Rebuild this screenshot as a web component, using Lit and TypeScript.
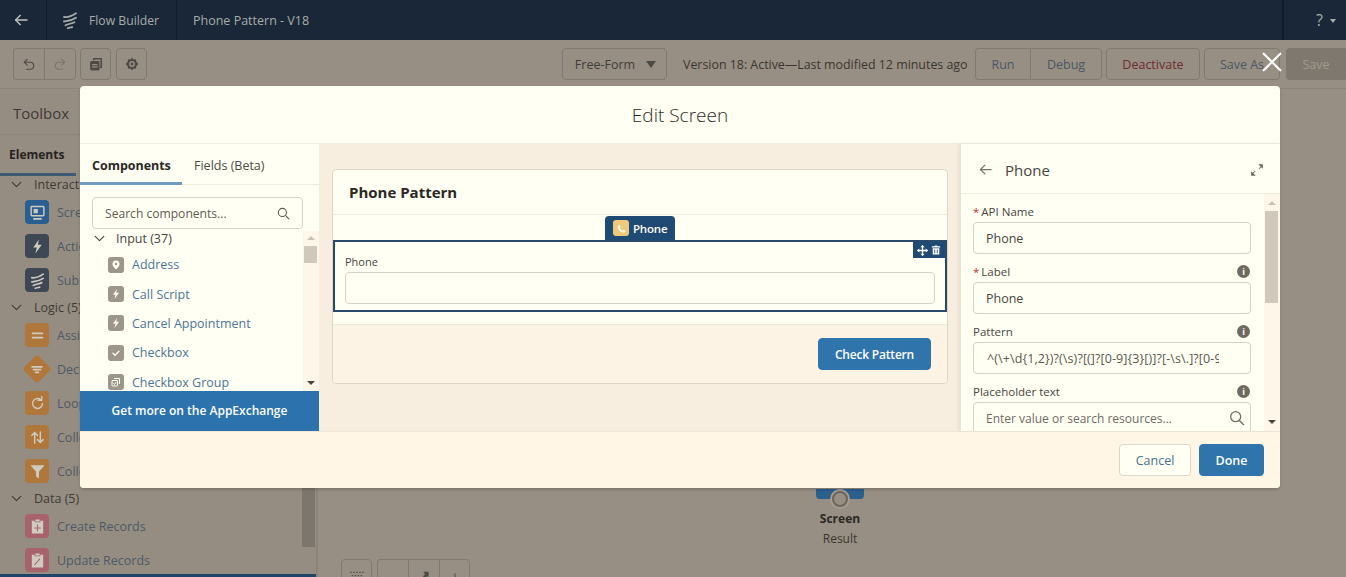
import { LitElement, html, css, svg } from "lit";
import { customElement } from "lit/decorators.js";

const ic = (body: unknown, size = 16, vb = 24, cls = "") =>
  html`<svg class=${cls} width=${size} height=${size} viewBox="0 0 ${vb} ${vb}" fill="none" stroke="currentColor" stroke-width="2" stroke-linecap="round" stroke-linejoin="round">${body}</svg>`;

const P = {
  flow: svg`<path d="M4 8c6 1 10-1 16-5" stroke-width="2.400"/><path d="M4 14c6-1 10-1 16-5" stroke-width="2.400"/><path d="M6 19c4-2 8-2 12-4" stroke-width="2.400"/><path d="M9 23c2-1 4-1 6-1.500" stroke-width="2.400"/>`,
  back: svg`<path d="M21 12H4"/><path d="M11 5l-7 7 7 7"/>`,
  undo: svg`<path d="M9 4L4 9l5 5"/><path d="M4 9h10a6 6 0 0 1 0 12H8"/>`,
  redo: svg`<path d="M15 4l5 5-5 5"/><path d="M20 9H10a6 6 0 0 0 0 12h6"/>`,
  copy: svg`<rect x="3" y="8" width="14" height="14" rx="1.5" fill="currentColor"/><path d="M8 4.500V3h13v15h-1.500" stroke-width="2.600"/><path d="M6 13h8M6 17h8" stroke="#988f84"/>`,
  gear: svg`<path fill="currentColor" stroke="none" fill-rule="evenodd" d="M12 1l2.500 3.200 4.300-.4.500 4.200L23 12l-3.700 4-.5 4.200-4.300-.4L12 23l-2.500-3.200-4.300.4-.5-4.200L1 12l3.700-4 .5-4.200 4.300.4zM12 7a5 5 0 1 0 0 10 5 5 0 0 0 0-10z"/><circle cx="12" cy="12" r="2.400" fill="currentColor" stroke="none"/>`,
  chevron: svg`<path d="M4 8l8 8 8-8"/>`,
  search: svg`<circle cx="10" cy="10" r="7.500"/><path d="M16 16l6 6"/>`,
  screen: svg`<rect x="3" y="3.500" width="18" height="13" rx="1"/><path d="M7 21h10" stroke-width="2.400"/><path fill="currentColor" stroke="none" d="M6.500 7h6v6h-6z"/>`,
  bolt: svg`<path fill="currentColor" stroke="none" d="M14 2L6 13.500h5L9 22l9-12.500h-5.500z"/>`,
  lines: svg`<path d="M5 9h14M5 15h14" stroke-width="2.500"/>`,
  decide: svg`<path d="M5 8h14M7 12h10M10 16h4" stroke-width="2.500"/>`,
  loop: svg`<path d="M19 12a7 7 0 1 1-2.500-5.400"/><path d="M18 2v5.500h-5.500"/>`,
  sort: svg`<path d="M8 20V5M4 9l4-4 4 4M16 4v15M12 15l4 4 4-4"/>`,
  filter: svg`<path fill="currentColor" stroke="none" d="M2 3h20l-8 9.500V22l-4-3v-6.500z"/>`,
  create: svg`<path fill="currentColor" stroke="none" d="M4 4h4v2h8V4h4v18H4zM9 2h6v3H9z"/><path stroke="#a8626c" d="M12 10v8M8 14h8" stroke-width="1.500"/>`,
  update: svg`<path fill="currentColor" stroke="none" d="M4 4h4v2h8V4h4v18H4zM9 2h6v3H9z"/><path stroke="#a8626c" d="M8 18l7-8" stroke-width="1.500"/>`,
  pin: svg`<path fill="currentColor" stroke="none" fill-rule="evenodd" d="M12 3a7 7 0 0 1 7 7c0 5-7 11-7 11s-7-6-7-11a7 7 0 0 1 7-7zm0 4.500a2.500 2.500 0 1 0 0 5 2.500 2.500 0 0 0 0-5z"/>`,
  check: svg`<path d="M6 12.500l4 4 8-8" stroke-width="2.500"/>`,
  group: svg`<rect x="4" y="9" width="11" height="11" rx="1"/><path d="M9 5h10v10"/><path d="M7 15l2 2 3-4"/>`,
  phone: svg`<path fill="currentColor" stroke="none" d="M8 5l2.500 3.500-1.500 2c1 2.500 2.500 4 5 5l2-1.500L19.500 17c-1 2-3 3-5 2.500C9.500 18 6 14.500 5 10c-.5-2 1-4 3-5z"/>`,
  move: svg`<path d="M12 2v20M2 12h20" stroke-width="3"/><path fill="currentColor" stroke="none" d="M12 0l4.500 5h-9zM12 24l4.500-5h-9zM0 12l5-4.500v9zM24 12l-5-4.500v9z"/>`,
  trash: svg`<path fill="currentColor" stroke="none" fill-rule="evenodd" d="M9 1h6v2h7v3H2V3h7zM4 8h16v15H4zm4 3v9h2v-9zm6 0v9h2v-9z"/>`,
  expand: svg`<path fill="currentColor" stroke="none" d="M22 2v8l-2.800-2.800-3.500 3.500-1-1 3.500-3.500L14 2zM2 22v-8l2.800 2.800 3.500-3.500 1 1-3.500 3.500L10 22z"/>`,
  dots: svg`<path stroke-dasharray="2 2.500" stroke-linecap="butt" d="M2 8h20M4 13h16"/><path d="M14 18l4 4" stroke-width="3"/>`,
  minus: svg`<path d="M4 22h16" stroke-width="4" stroke-linecap="butt"/>`,
  shrink: svg`<path d="M2 24l8-8" stroke-width="1.500"/><path fill="currentColor" stroke="none" d="M11 7h8v8l-2.500-1-3 3-3-3 3-3z"/>`,
  plus: svg`<path d="M12 10v14M5 18h14" stroke-width="1.500"/>`,
};

const sidebar = [
  { title: "Interaction", rows: [["Screen", "#295f90", P.screen, 1], ["Action", "#3e4754", P.bolt, 0], ["Subflow", "#3e4754", P.flow, 1]] },
  { title: "Logic (5)", rows: [["Assignment", "#b0773c", P.lines, 1], ["Decision", "#b0773c", P.decide, 2], ["Loop", "#b0773c", P.loop, 1], ["Collection Sort", "#b0773c", P.sort, 1], ["Collection Filter", "#b0773c", P.filter, 0]] },
  { title: "Data (5)", rows: [["Create Records", "#a8626c", P.create, 0], ["Update Records", "#a8626c", P.update, 0]] },
] as const;

const components = [
  ["Address", P.pin],
  ["Call Script", P.bolt],
  ["Cancel Appointment", P.bolt],
  ["Checkbox", P.check],
  ["Checkbox Group", P.group],
] as const;

const info = html`<span class="info">i</span>`;

@customElement("app-root")
export class AppRoot extends LitElement {
  static styles = css`
    :host { display: block; width: 1346px; height: 577px; position: relative; overflow: hidden; background: #988f84; font-family: "Open Sans", "Noto Sans", sans-serif; font-size: 13px; color: #2a2823; }
    * { box-sizing: border-box; }
    svg { display: block; flex: none; }

    .topbar { height: 40px; background: #1a2738; color: #a8aca9; display: flex; align-items: center; font-size: 12.500px; }
    .topbar > div { height: 40px; display: flex; align-items: center; border-right: 1px solid #111c2a; }
    .tb-back { width: 47px; padding-left: 13px; color: #c4c5bf; }
    .tb-app { width: 130px; padding-left: 14px; gap: 10px; font-size: 12.200px; }
    .tb-name { padding-left: 16px; flex: 1; }
    .topbar > .tb-help { width: 63px; border: 0; border-left: 1px solid #111c2a; padding-left: 32px; gap: 7px; font-size: 16px; }
    .caret { width: 0; height: 0; border: 3px solid transparent; border-top: 4px solid currentColor; margin-top: 4px; }

    .toolbar { height: 49px; border-bottom: 1px solid #8d8479; display: flex; align-items: center; padding-left: 13px; }
    .btn { height: 32px; border: 1px solid #807970; border-radius: 4px; display: flex; align-items: center; justify-content: center; color: #4a5864; font-size: 12.500px; white-space: nowrap; }
    .ibtn { width: 31px; color: #4b4a45; }
    .ibtn.off { color: #7a756c; width: 32px; }
    .grp { display: flex; }
    .grp .btn:first-child { border-radius: 4px 0 0 4px; border-right: 0; }
    .grp .btn:last-child { border-radius: 0 4px 4px 0; }
    .m4 { margin-left: 4px; }
    .m5 { margin-left: 5px; }
    .free { width: 105px; margin-left: 415px; gap: 11px; color: #3f3d38; padding-left: 2px; }
    .tri { width: 0; height: 0; border: 5px solid transparent; border-top: 7px solid #4b4a45; border-bottom: 0; }
    .ver { margin-left: 16px; width: 292px; font-size: 12.400px; color: #38362f; white-space: nowrap; }
    .run { width: 55px; }
    .dbg { width: 72px; }
    .deact { width: 94px; color: #6e2a2c; }
    .saveas { width: 76px; }
    .save { width: 60px; margin-left: 6px; background: #7f786e; border-color: #7f786e; color: #a29a8d; border-radius: 4px 0 0 4px; }

    .main { display: flex; height: 488px; }
    .side { width: 318px; height: 488px; background: #968d82; border-right: 2px solid #8d8479; position: relative; overflow: hidden; }
    .side-title { height: 46px; padding: 14px 0 0 13px; font-size: 15px; color: #3d3b36; border-bottom: 1px solid #8d8479; }
    .side-tabs { height: 41px; padding: 11px 0 0 9px; font-weight: 700; font-size: 12px; color: #25231f; position: relative; }
    .side-tabs i { position: absolute; left: 0; bottom: 0; width: 76px; height: 3px; background: #3f5a74; }
    .secs { margin-top: -2px; }
    .sec { height: 21px; display: flex; align-items: center; gap: 11px; padding-left: 10px; color: #3d3b36; font-size: 12.500px; }
    .sec svg { color: #3a3833; }
    .srow { height: 34px; display: flex; align-items: center; gap: 8px; padding-left: 25px; color: #4c5a66; font-size: 12.500px; }
    .sico { width: 24px; height: 24px; border-radius: 4px; color: #cfcbc0; display: flex; align-items: center; justify-content: center; }
    .sico.dia { transform: rotate(45deg) scale(.86); }
    .sico.dia svg { transform: rotate(-45deg) scale(1.16); }
    .sbar { position: absolute; left: 302px; top: 0; width: 13px; height: 458px; background: #7d766c; }
    .sbottom { position: absolute; left: 0; right: 0; bottom: 0; height: 3px; background: #1f4566; }
    .canvas { flex: 1; position: relative; }
    .node { position: absolute; left: 482px; top: 400px; width: 80px; display: flex; flex-direction: column; align-items: center; font-size: 12px; }
    .node-top { width: 48px; height: 10px; background: #2b5f8c; border-radius: 0 0 4px 4px; }
    .node-dot { width: 16px; height: 16px; border-radius: 50%; background: #988f84; border: 2px solid #6b665d; box-shadow: 0 0 0 2px #a59d91; margin-top: -8px; }
    .node b { margin-top: 3px; color: #2a2823; }
    .node span { margin-top: 3px; color: #38362f; }
    .zoomer { position: absolute; left: 23px; top: 470px; display: flex; gap: 5px; color: #4b4a45; }
    .zoomer .btn { height: 32px; width: 31px; border-color: #807970; color: #4b4a45; }
    .zoomer .grp .btn:nth-child(2) { border-radius: 0; border-right: 0; }

    .close { position: absolute; left: 1261px; top: 51px; color: #fff; }
    .modal { position: absolute; left: 80px; top: 86px; width: 1200px; height: 402px; background: #fffff3; border-radius: 4px; display: flex; flex-direction: column; overflow: hidden; box-shadow: 0 2px 3px rgba(0,0,0,.16); }
    .m-head { height: 58px; flex: none; display: flex; align-items: center; justify-content: center; font-size: 19px; font-weight: 300; color: #2e2c27; border-bottom: 1px solid #f0ebdb; }
    .m-body { flex: 1; min-height: 0; display: flex; }
    .m-foot { height: 57px; flex: none; background: #fff6e6; border-top: 1px solid #f0e8d6; display: flex; align-items: center; justify-content: flex-end; gap: 8px; padding: 0 16px 0 0; }
    .cancel { width: 72px; background: #fffff3; border: 1px solid #dcd6c6; color: #47708f; }
    .done { width: 65px; background: #2f75ab; border: 1px solid #2f75ab; color: #fff; font-weight: 600; }

    .left { width: 240px; flex: none; display: flex; flex-direction: column; border-right: 1px solid #f5efdf; }
    .tabs { height: 41px; flex: none; display: flex; border-bottom: 1px solid #f0ebdb; font-size: 12.500px; }
    .tab { height: 41px; padding: 2px 12px 0; display: flex; align-items: center; color: #4d4b45; }
    .tab.on { width: 102px; font-weight: 700; color: #2a2823; border-bottom: 3px solid #6f9bbd; padding-top: 4px; letter-spacing: -.03px; }
    .s-wrap { height: 46px; flex: none; padding: 12px 0 0 12px; }
    .search { width: 211px; height: 32px; border: 1px solid #d8d2c2; border-radius: 4px; display: flex; align-items: center; justify-content: space-between; padding: 0 12px; color: #5f5c54; font-size: 12.100px; }
    .search svg { color: #5f5c54; }
    .list { flex: 1; min-height: 0; position: relative; overflow: hidden; padding-right: 16px; }
    .l-sec { height: 14px; display: flex; align-items: center; gap: 10px; padding-left: 13px; color: #47453f; font-size: 12.500px; }
    .l-sec svg { color: #47453f; }
    .l-row { height: 29.400px; display: flex; align-items: center; gap: 8px; padding-left: 28px; color: #4e7595; font-size: 12.500px; white-space: nowrap; }
    .l-sec + .l-row { margin-top: 5px; }
    .lico { width: 16px; height: 16px; border-radius: 3px; background: #9d968a; color: #fffff3; display: flex; align-items: center; justify-content: center; }
    .sb { position: absolute; right: 0; top: 0; bottom: 0; width: 16px; background: #fdf6e9; }
    .sb i { position: absolute; left: 1px; width: 13px; background: #cfc8bb; }
    .sb b { position: absolute; left: 4px; width: 0; height: 0; border: 4px solid transparent; }
    .sb .up { border-bottom: 4px solid #c9c3b6; border-top: 0; }
    .sb .dn { border-top: 4px solid #47453f; border-bottom: 0; }
    .appx { height: 40px; flex: none; background: #2c73ad; color: #fff; font-weight: 600; font-size: 12px; display: flex; align-items: center; justify-content: center; padding-bottom: 1px; }

    .center { flex: 1; background: #f8eee0; padding: 25px 12px 0 12px; }
    .card { height: 215px; border: 1px solid #ddd6c6; border-radius: 4px; background: #fffff3; display: flex; flex-direction: column; }
    .c-title { height: 45px; flex: none; padding: 0 16px; display: flex; align-items: center; font-size: 15px; font-weight: 700; color: #2a2823; border-bottom: 1px solid #f0ebdb; }
    .c-mid { height: 110px; flex: none; padding-top: 25px; border-bottom: 1px solid #f0ebdb; position: relative; }
    .badge { position: absolute; left: 272px; top: 1px; width: 70px; height: 24px; background: #1f4a73; border-radius: 4px 4px 0 0; color: #fff; font-size: 11.500px; display: flex; align-items: center; gap: 4px; padding-left: 8px; font-weight: 600; letter-spacing: -.2px; }
    .p-ico { width: 16px; height: 16px; border-radius: 3px; background: #eec87c; color: #fff8e0; display: flex; align-items: center; justify-content: center; }
    .sel { height: 72px; border: 2px solid #2a4a6d; padding: 12px 10px 0 10px; position: relative; }
    .sel label { display: block; font-size: 11px; line-height: 15px; color: #47453f; }
    .sel .box { height: 32px; margin-top: 3px; border: 1px solid #d8d2c2; border-radius: 4px; }
    .tools { position: absolute; right: 0; top: 0; width: 32px; height: 16px; background: #1f4a73; color: #fff; display: flex; align-items: center; justify-content: center; gap: 3px; }
    .c-foot { flex: 1; background: #fcf3e4; border-radius: 0 0 4px 4px; display: flex; justify-content: flex-end; padding: 13px 16px 0 0; }
    .check { width: 113px; background: #2f75ab; border: 1px solid #2f75ab; color: #fff; font-weight: 600; font-size: 12px; letter-spacing: -.2px; }

    .right { width: 320px; flex: none; display: flex; flex-direction: column; border-left: 1px solid #e9e3d3; box-shadow: -2px 0 3px rgba(0,0,0,.06); position: relative; }
    .r-head { height: 50px; flex: none; display: flex; align-items: center; padding: 2px 16px 0 17px; gap: 12px; font-size: 15px; color: #47453f; border-bottom: 1px solid #f0ebdb; }
    .r-head .name { flex: 1; font-weight: 400; }
    .r-head .ex { color: #6b685f; }
    .r-head .ba { color: #77746b; }
    .r-body { flex: 1; min-height: 0; overflow: hidden; position: relative; padding: 10px 29px 0 12px; display: flex; flex-direction: column; gap: 10px; }
    .f { flex: none; }
    .f-l { height: 16px; padding: 0 1px 2px 0; display: flex; align-items: center; justify-content: space-between; font-size: 11.500px; color: #47453f; }
    .f-l em { color: #b4342c; font-style: normal; margin-right: 2px; }
    .info { width: 13px; height: 13px; border-radius: 50%; background: #6d6a61; color: #fffff3; font-size: 9px; font-weight: 700; line-height: 13px; text-align: center; font-style: normal; }
    .inp { height: 32px; margin-top: 2px; border: 1px solid #d8d2c2; border-radius: 4px; padding: 0 12px; display: flex; align-items: center; justify-content: space-between; font-size: 12.500px; color: #47453f; white-space: nowrap; overflow: hidden; }
    .inp.ph { color: #6f6c63; padding-right: 5px; font-size: 12px; }
    .clip { display: block; width: 232px; overflow: hidden; letter-spacing: .1px; margin-left: 1px; color: #5a5850; }
    .r-sb { position: absolute; right: 0; top: 0; bottom: 0; width: 16px; background: #fdf6e9; }
    .r-sb i { position: absolute; left: 1px; top: 17px; width: 13px; height: 92px; background: #cfc8bb; }
    .r-sb b { position: absolute; left: 4px; width: 0; height: 0; border: 4px solid transparent; }
    .r-sb .up { top: 7px; border-bottom: 4px solid #c9c3b6; border-top: 0; }
    .r-sb .dn { bottom: 7px; border-top: 4px solid #47453f; border-bottom: 0; }
  `;

  render() {
    return html`
      <div class="topbar">
        <div class="tb-back">${ic(P.back, 16)}</div>
        <div class="tb-app">${ic(P.flow, 18)}<span>Flow Builder</span></div>
        <div class="tb-name">Phone Pattern - V18</div>
        <div class="tb-help">?<span class="caret"></span></div>
      </div>

      <div class="toolbar">
        <div class="grp"><div class="btn ibtn">${ic(P.undo, 14)}</div><div class="btn ibtn off">${ic(P.redo, 14)}</div></div>
        <div class="btn ibtn m4">${ic(P.copy, 14)}</div>
        <div class="btn ibtn m5">${ic(P.gear, 14)}</div>
        <div class="btn free">Free-Form <span class="tri"></span></div>
        <div class="ver">Version 18: Active—Last modified 12 minutes ago</div>
        <div class="grp"><div class="btn run">Run</div><div class="btn dbg">Debug</div></div>
        <div class="btn deact m4">Deactivate</div>
        <div class="btn saveas m4">Save As</div>
        <div class="btn save">Save</div>
      </div>

      <div class="main">
        <div class="side">
          <div class="side-title">Toolbox</div>
          <div class="side-tabs">Elements<i></i></div>
          <div class="secs">
            ${sidebar.map(
              (s) => html`
                <div class="sec">${ic(P.chevron, 13)}<span>${s.title}</span></div>
                ${s.rows.map(
                  (r) => html`<div class="srow">
                    <div class="sico ${r[3] === 2 ? "dia" : ""}" style="background:${r[1]}">${ic(r[2], 17)}</div>
                    <span>${r[0]}</span>
                  </div>`
                )}
              `
            )}
          </div>
          <div class="sbar"></div>
          <div class="sbottom"></div>
        </div>
        <div class="canvas">
          <div class="node"><div class="node-top"></div><div class="node-dot"></div><b>Screen</b><span>Result</span></div>
          <div class="zoomer">
            <div class="btn">${ic(P.dots, 16)}</div>
            <div class="grp">
              <div class="btn">${ic(P.minus, 16)}</div>
              <div class="btn">${ic(P.shrink, 16)}</div>
              <div class="btn">${ic(P.plus, 16)}</div>
            </div>
          </div>
        </div>
      </div>

      <div class="modal">
        <div class="m-head">Edit Screen</div>
        <div class="m-body">
          <div class="left">
            <div class="tabs"><div class="tab on">Components</div><div class="tab">Fields (Beta)</div></div>
            <div class="s-wrap"><div class="search"><span>Search components...</span>${ic(P.search, 13)}</div></div>
            <div class="list">
              <div class="l-sec">${ic(P.chevron, 13)}<span>Input (37)</span></div>
              ${components.map((c) => html`<div class="l-row"><div class="lico">${ic(c[1], 12)}</div><span>${c[0]}</span></div>`)}
              <div class="sb"><b class="up" style="top:5px"></b><i style="top:15px;height:17px"></i><b class="dn" style="bottom:6px"></b></div>
            </div>
            <div class="appx">Get more on the AppExchange</div>
          </div>

          <div class="center">
            <div class="card">
              <div class="c-title">Phone Pattern</div>
              <div class="c-mid">
                <div class="badge"><div class="p-ico">${ic(P.phone, 13)}</div>Phone</div>
                <div class="sel">
                  <label>Phone</label>
                  <div class="box"></div>
                  <div class="tools">${ic(P.move, 11)}${ic(P.trash, 10)}</div>
                </div>
              </div>
              <div class="c-foot"><div class="btn check">Check Pattern</div></div>
            </div>
          </div>

          <div class="right">
            <div class="r-head"><span class="ba">${ic(P.back, 15)}</span><span class="name">Phone</span><span class="ex">${ic(P.expand, 14)}</span></div>
            <div class="r-body">
              <div class="f"><div class="f-l"><span><em>*</em>API Name</span></div><div class="inp">Phone</div></div>
              <div class="f"><div class="f-l"><span><em>*</em>Label</span>${info}</div><div class="inp">Phone</div></div>
              <div class="f"><div class="f-l"><span>Pattern</span>${info}</div><div class="inp"><span class="clip">^(\\+\\d{1,2})?(\\s)?[(]?[0-9]{3}[)]?[-\\s\\.]?[0-9]{3}[-\\s\\.]?[0-9]{4}$</span></div></div>
              <div class="f"><div class="f-l"><span>Placeholder text</span>${info}</div><div class="inp ph"><span>Enter value or search resources...</span>${ic(P.search, 16)}</div></div>
              <div class="r-sb"><b class="up"></b><i></i><b class="dn"></b></div>
            </div>
          </div>
        </div>
        <div class="m-foot"><div class="btn cancel">Cancel</div><div class="btn done">Done</div></div>
      </div>

      <div class="close">${ic(svg`<path d="M3 3l18 18M21 3L3 21" stroke-width="2.500"/>`, 22)}</div>
    `;
  }
}
